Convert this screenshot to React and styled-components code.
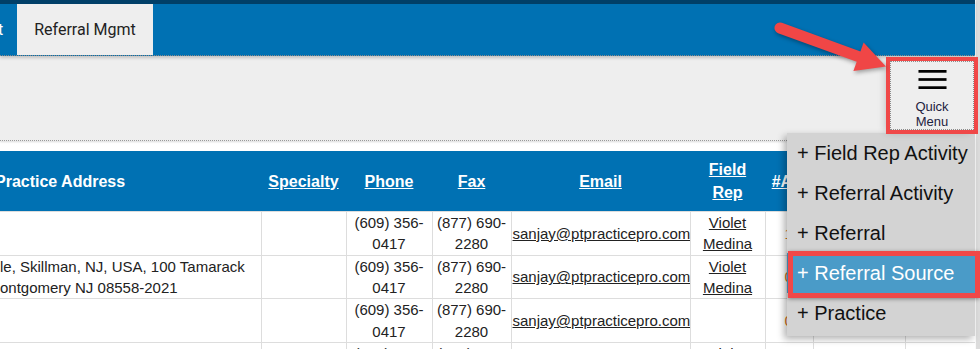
import React from "react";
import styled, { createGlobalStyle } from "styled-components";

const GlobalStyle = createGlobalStyle`
  html, body { margin: 0; padding: 0; background: #ffffff; overflow: hidden; }
  body { font-family: "Liberation Sans", Arial, sans-serif; }
  #root { width: 980px; height: 349px; overflow: hidden; }
`;

const Page = styled.div`
  position: relative;
  display: flex;
  width: 980px;
  height: 349px;
  overflow: hidden;
  background: #ffffff;
`;

const Main = styled.div`
  flex: none;
  width: 975px;
  display: flex;
  flex-direction: column;
`;

const ScrollStrip = styled.div`
  flex: 1;
  background: #dcdcdc;
  border-left: 1px solid #fafafa;
`;

/* ---------- top navigation ---------- */
const NavBar = styled.nav`
  position: relative;
  z-index: 1;
  flex: none;
  display: flex;
  height: 51px;
  background: #0071b3;
  border-top: 4px solid #003f68;
  border-bottom: 1px dotted #8a8a8a;
  box-shadow: 0 2px 3px rgba(0, 0, 0, 0.18);
`;

const NavTab = styled.div`
  display: flex;
  align-items: center;
  padding: 0 17px;
  font-family: Roboto, "Liberation Sans", sans-serif;
  font-size: 16px;
  color: ${(p) => (p.$active ? "#222222" : "#ffffff")};
  background: ${(p) => (p.$active ? "#eeeeee" : "transparent")};
  ${(p) => p.$clipped && "margin-left: -2px; padding: 0 14px 0 0;"}
`;

/* ---------- toolbar with quick menu ---------- */
const Toolbar = styled.div`
  flex: none;
  display: flex;
  justify-content: flex-end;
  align-items: flex-start;
  box-sizing: border-box;
  height: 85px;
  padding: 5px 1px 0 0;
  background: #eeeeee;
  border-bottom: 1px dotted #999999;
  box-shadow: 0 1px 2px rgba(0, 0, 0, 0.15);
`;

const QuickWrap = styled.div`
  position: relative;
`;

const QuickButton = styled.div`
  position: relative;
  z-index: 3;
  box-sizing: border-box;
  width: 84px;
  height: 69px;
  padding-top: 8px;
  display: flex;
  flex-direction: column;
  align-items: center;
  background: #eeeeee;
  border: 1px dotted #8c8c8c;
  outline: 4px solid #f04848;
  box-shadow: -4px 2px 8px rgba(0, 0, 0, 0.22);
`;

const QuickLabel = styled.div`
  margin-top: 10px;
  font-size: 13px;
  line-height: 15px;
  color: #1d2240;
  text-align: center;
`;

const Menu = styled.div`
  position: absolute;
  z-index: 2;
  top: calc(100% + 3px);
  right: -1px;
  width: 188px;
  padding-bottom: 3px;
  background: #d3d3d3;
  box-shadow: -3px 3px 7px rgba(0, 0, 0, 0.3);
`;

const MenuItem = styled.div`
  position: relative;
  height: 40px;
  display: flex;
  align-items: center;
  padding-left: 10px;
  font-size: 20px;
  white-space: nowrap;
  color: ${(p) => (p.$active ? "#ffffff" : "#111111")};
  background: ${(p) => (p.$active ? "#4a9bc8" : "transparent")};
  ${(p) =>
    p.$annotated &&
    `
    &::after {
      content: "";
      position: absolute;
      top: -2px;
      left: 1px;
      right: -5px;
      bottom: -5px;
      border: 5px solid #f04848;
      box-shadow: 0 1px 4px rgba(0, 0, 0, 0.4);
    }
  `}
`;

/* ---------- table ---------- */
const TableWrap = styled.div`
  margin-top: 10px;
`;

const Grid = styled.table`
  border-collapse: collapse;
  table-layout: fixed;
  width: 975px;
`;

const Col = styled.col`
  width: ${(p) => p.$w}px;
`;

const HeadCell = styled.th`
  height: 60px;
  padding: 0 4px;
  background: #0071b3;
  color: #ffffff;
  font-size: 16px;
  font-weight: bold;
  line-height: 23px;
  text-align: center;
  vertical-align: middle;
  ${(p) => p.$left && "text-align: left; text-indent: -5px; padding: 0; white-space: nowrap;"}
`;

const HeadLink = styled.a`
  color: #ffffff;
  text-decoration: underline;
`;

const Cell = styled.td`
  border: 1px solid #dddddd;
  padding: 0 1px;
  font-size: 15px;
  line-height: 21.35px;
  color: #222222;
  text-align: center;
  vertical-align: middle;
  overflow: hidden;
  ${(p) => p.$left && "text-align: left; padding: 0; white-space: nowrap; border-left: none;"}
  ${(p) => p.$count && "text-align: left; padding-left: 19px; color: #d4731c;"}
`;

const TextLink = styled.a`
  color: #222222;
  text-decoration: underline;
`;

const ArrowSvg = styled.svg`
  position: absolute;
  z-index: 5;
  left: 770px;
  top: 15px;
  pointer-events: none;
  overflow: visible;
  filter: drop-shadow(1px 2px 2px rgba(0, 0, 0, 0.35));
`;

const Hamburger = () => (
  <svg width="31" height="21" viewBox="0 0 31 21">
    <rect x="0" y="0" width="31" height="3" fill="#000" />
    <rect x="0" y="9" width="31" height="3" fill="#000" />
    <rect x="0" y="18" width="31" height="3" fill="#000" />
  </svg>
);

const rows = [
  { addr: null, rep: true, count: "1" },
  {
    addr: ["le, Skillman, NJ, USA, 100 Tamarack", "ontgomery NJ 08558-2021"],
    rep: true,
    count: "0",
  },
  { addr: null, rep: false, count: "0" },
  { addr: null, rep: true, count: "0" },
];

const menuItems = [
  "+ Field Rep Activity",
  "+ Referral Activity",
  "+ Referral",
  "+ Referral Source",
  "+ Practice",
];

export default function App() {
  return (
    <>
      <GlobalStyle />
      <Page>
        <Main>
          <NavBar>
            <NavTab $clipped>t</NavTab>
            <NavTab $active>Referral Mgmt</NavTab>
          </NavBar>

          <Toolbar>
            <QuickWrap>
              <QuickButton>
                <Hamburger />
                <QuickLabel>
                  Quick
                  <br />
                  Menu
                </QuickLabel>
              </QuickButton>
              <Menu>
                {menuItems.map((label) => (
                  <MenuItem
                    key={label}
                    $active={label === "+ Referral Source"}
                    $annotated={label === "+ Referral Source"}
                  >
                    {label}
                  </MenuItem>
                ))}
              </Menu>
            </QuickWrap>
          </Toolbar>

          <TableWrap>
            <Grid>
              <colgroup>
                <Col $w={261} />
                <Col $w={85} />
                <Col $w={86} />
                <Col $w={79} />
                <Col $w={179} />
                <Col $w={75} />
                <Col $w={48} />
                <Col $w={92} />
                <Col $w={70} />
              </colgroup>
              <thead>
                <tr>
                  <HeadCell $left>Practice Address</HeadCell>
                  <HeadCell>
                    <HeadLink>Specialty</HeadLink>
                  </HeadCell>
                  <HeadCell>
                    <HeadLink>Phone</HeadLink>
                  </HeadCell>
                  <HeadCell>
                    <HeadLink>Fax</HeadLink>
                  </HeadCell>
                  <HeadCell>
                    <HeadLink>Email</HeadLink>
                  </HeadCell>
                  <HeadCell>
                    <HeadLink>Field Rep</HeadLink>
                  </HeadCell>
                  <HeadCell>
                    <HeadLink>#Act</HeadLink>
                  </HeadCell>
                  <HeadCell />
                  <HeadCell />
                </tr>
              </thead>
              <tbody>
                {rows.map((r, i) => (
                  <tr key={i}>
                    <Cell $left>
                      {r.addr && (
                        <>
                          {r.addr[0]}
                          <br />
                          {r.addr[1]}
                        </>
                      )}
                    </Cell>
                    <Cell />
                    <Cell>
                      (609) 356-
                      <br />
                      0417
                    </Cell>
                    <Cell>
                      (877) 690-
                      <br />
                      2280
                    </Cell>
                    <Cell>
                      <TextLink>sanjay@ptpracticepro.com</TextLink>
                    </Cell>
                    <Cell>{r.rep && <TextLink>Violet Medina</TextLink>}</Cell>
                    <Cell $count>{r.count}</Cell>
                    <Cell />
                    <Cell />
                  </tr>
                ))}
              </tbody>
            </Grid>
          </TableWrap>
        </Main>
        <ScrollStrip />

        <ArrowSvg width="130" height="70" viewBox="0 0 130 70">
          <line
            x1="10"
            y1="13"
            x2="90"
            y2="42.2"
            stroke="#f04646"
            strokeWidth="11"
            strokeLinecap="round"
          />
          <polygon points="116,51.5 83.4,56 93.6,27.6" fill="#f04646" />
        </ArrowSvg>
      </Page>
    </>
  );
}
